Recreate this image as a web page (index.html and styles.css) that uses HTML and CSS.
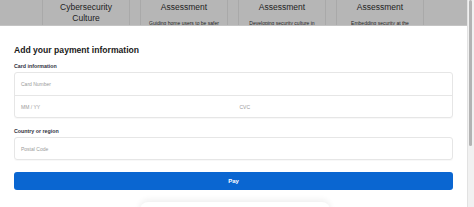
FILE: index.html
```html
<!DOCTYPE html>
<html lang="en">
<head>
    <meta charset="UTF-8">
    <meta name="viewport" content="width=device-width, initial-scale=1.0">
    <title>Add your payment information</title>
    <link rel="stylesheet" href="styles.css">
</head>
<body>

<div class="page">
    <div class="main">
        <!-- Topic cards behind the overlay -->
        <div class="topics">
            <div class="topic">
                <h3>Cybersecurity Culture</h3>
            </div>
            <div class="topic">
                <h3>Assessment</h3>
                <p>Guiding home users to be safer online and at work</p>
            </div>
            <div class="topic">
                <h3>Assessment</h3>
                <p>Developing security culture in small teams</p>
            </div>
            <div class="topic">
                <h3>Assessment</h3>
                <p>Embedding security at the organisational level</p>
            </div>
        </div>

        <section class="payment">
            <h2>Add your payment information</h2>

            <label class="field-label">Card information</label>
            <div class="input-group">
                <div class="input-row">
                    <span class="placeholder">Card Number</span>
                </div>
                <div class="input-row split">
                    <span class="placeholder">MM / YY</span>
                    <span class="placeholder">CVC</span>
                </div>
            </div>

            <label class="field-label country">Country or region</label>
            <div class="input-group">
                <div class="input-row single">
                    <span class="placeholder">Postal Code</span>
                </div>
            </div>

            <button class="pay-btn">Pay</button>

            <div class="footer-card"></div>
        </section>
    </div>

    <div class="scrollbar">
        <div class="thumb"></div>
    </div>
</div>

</body>
</html>
```

FILE: styles.css
```css
/* Page */
body {
    margin: 0;
    width: 474px;
    height: 207px;
    overflow: hidden;
    background: #fff;
    font-family: "Liberation Sans", Arial, sans-serif;
}

.page {
    display: flex;
    height: 207px;
}

.main {
    width: 467px;
    overflow: hidden;
}

/* Topic cards strip */
.topics {
    height: 26px;
    background-color: #b6b6b6;
    display: flex;
    gap: 10px;
    padding-left: 42px;
    overflow: hidden;
    border-bottom: 1px solid #c4c4c4;
    box-sizing: border-box;
}

.topic {
    width: 88px;
    flex-shrink: 0;
    padding: 0 7px;
    box-sizing: border-box;
    border-left: 1px solid #a9a9a9;
    border-right: 1px solid #a9a9a9;
    text-align: center;
    color: #222;
}

.topic h3 {
    margin: 2px 0 0;
    font-size: 8.5px;
    font-weight: normal;
    line-height: 11px;
}

.topic p {
    margin: 7px 0 0;
    font-size: 5px;
    line-height: 6px;
}

/* Payment form */
.payment {
    padding: 0 14px 0 14px;
}

.payment h2 {
    margin: 18px 0 0;
    font-size: 8.6px;
    line-height: 12px;
    font-weight: bold;
    color: #1a1a1a;
}

.field-label {
    display: block;
    margin-top: 7px;
    font-size: 5.3px;
    line-height: 6px;
    font-weight: bold;
    color: #30313d;
}

.field-label.country {
    margin-top: 10px;
}

.input-group {
    margin-top: 3px;
    border: 1px solid #e6e6e6;
    border-radius: 3px;
    box-shadow: 0 1px 1px rgba(0, 0, 0, 0.03);
}

.input-row {
    height: 22px;
    display: flex;
    align-items: center;
    padding-left: 6px;
    border-bottom: 1px solid #e6e6e6;
}

.input-row:last-child {
    border-bottom: none;
    height: 21px;
}

.input-row.split {
    padding-left: 0;
}

.input-row.split .placeholder {
    flex: 1;
    padding-left: 6px;
}

.placeholder {
    font-size: 5px;
    color: #9a9a9a;
}

.pay-btn {
    display: block;
    width: 100%;
    height: 18px;
    margin-top: 12px;
    border: none;
    border-radius: 3px;
    background-color: #0a66d1;
    color: #fff;
    font-family: "Liberation Sans", Arial, sans-serif;
    font-size: 6px;
    font-weight: bold;
    cursor: pointer;
}

.footer-card {
    width: 190px;
    height: 20px;
    margin: 12px 0 0 126px;
    border-radius: 8px;
    background: #fff;
    box-shadow: 0 -2px 6px rgba(0, 0, 0, 0.07);
}

/* Scrollbar */
.scrollbar {
    width: 7px;
    background-color: #f1f1f1;
    border-left: 1px solid #e2e2e2;
    box-sizing: border-box;
}

.thumb {
    width: 3px;
    height: 146px;
    margin-left: 1px;
    border-radius: 2px;
    background-color: #b3b3b3;
}
```
